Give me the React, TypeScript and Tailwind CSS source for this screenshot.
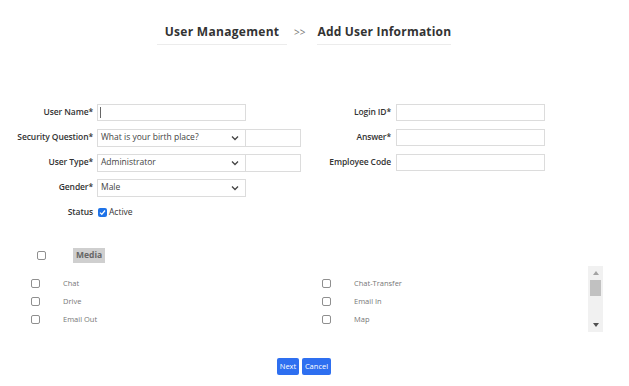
import React from "react";

function Chevron() {
  return (
    <svg width="8" height="6" viewBox="0 0 8 6" className="shrink-0">
      <path d="M1 1.5 L4 4.5 L7 1.5" fill="none" stroke="#444" strokeWidth="1.3" />
    </svg>
  );
}

function TextInput({ w = "w-[149px]", cursor = false }: { w?: string; cursor?: boolean }) {
  return (
    <div className={`${w} h-[17px] border border-[#dcdcdc] bg-white flex items-center px-[2px]`}>
      {cursor && <div className="w-px h-[11px] bg-[#666]" />}
    </div>
  );
}

function Select({ value, extra = false }: { value: string; extra?: boolean }) {
  return (
    <div className="flex items-center">
      <div className="w-[149px] h-[18px] border border-[#dcdcdc] bg-white flex items-center justify-between pl-[3px] pr-[6px]">
        <span className="text-[8.5px] text-[#444]">{value}</span>
        <Chevron />
      </div>
      {extra && <div className="w-[55px] h-[18px] border border-l-0 border-[#dcdcdc] bg-white" />}
    </div>
  );
}

function Label({ children }: { children: React.ReactNode }) {
  return <div className="text-right text-[8.5px] font-semibold text-[#333] tracking-[-0.1px]">{children}</div>;
}

function Box() {
  return <div className="w-[9px] h-[9px] border border-[#8f8f8f] rounded-[2px] bg-white" />;
}

export default function App() {
  const left = ["Chat", "Drive", "Email Out"];
  const right = ["Chat-Transfer", "Email In", "Map"];
  return (
    <div className="w-[629px] h-[386px] bg-white font-['Open_Sans',sans-serif] overflow-hidden">
      {/* Title */}
      <div className="flex items-start pt-[23px] pl-[157px] text-[12px] font-bold text-[#333]">
        <div className="w-[130px] border-b border-[#ececec] pb-[3px] text-center tracking-[0.3px]">User Management</div>
        <div className="pl-[7px] pr-[12px] font-normal text-[#777] text-[10px] pt-[2px]">&gt;&gt;</div>
        <div className="border-b border-[#ececec] pb-[3px] tracking-[0.2px]">Add User Information</div>
      </div>

      {/* Form */}
      <div className="flex mt-[55px]">
        <div className="w-[310px] grid grid-cols-[93px_auto] gap-x-[4px] auto-rows-[25px] items-center">
          <Label>User Name*</Label>
          <TextInput cursor />
          <Label>Security Question*</Label>
          <Select value="What is your birth place?" extra />
          <Label>User Type*</Label>
          <Select value="Administrator" extra />
          <Label>Gender*</Label>
          <Select value="Male" />
          <Label>Status</Label>
          <div className="flex items-center gap-[2px] pl-[1px]">
            <div className="w-[9px] h-[9px] rounded-[2px] bg-[#1f73e8] flex items-center justify-center">
              <svg width="7" height="7" viewBox="0 0 7 7">
                <path d="M1 3.6 L2.8 5.3 L6 1.5" fill="none" stroke="white" strokeWidth="1.3" />
              </svg>
            </div>
            <span className="text-[8.5px] text-[#333]">Active</span>
          </div>
        </div>
        <div className="grid grid-cols-[81px_auto] gap-x-[5px] auto-rows-[25px] items-center content-start">
          <Label>Login ID*</Label>
          <TextInput />
          <Label>Answer*</Label>
          <TextInput />
          <Label>Employee Code</Label>
          <TextInput />
        </div>
      </div>

      {/* Media header */}
      <div className="flex items-center mt-[23px] pl-[37px] h-[15px]">
        <Box />
        <div className="ml-[27px] bg-[#cfcfcf] px-[3px] h-[15px] flex items-center text-[8.5px] font-bold text-[#666]">Media</div>
      </div>

      {/* List */}
      <div className="flex mt-[3px] h-[66px] pl-[31px] w-[603px]">
        <div className="flex-1 flex pt-[13px]">
          <div className="w-[291px] flex flex-col gap-[9px]">
            {left.map((t) => (
              <div key={t} className="flex items-center h-[9px]">
                <Box />
                <span className="ml-[23px] text-[7.5px] text-[#777]">{t}</span>
              </div>
            ))}
          </div>
          <div className="flex flex-col gap-[9px]">
            {right.map((t) => (
              <div key={t} className="flex items-center h-[9px]">
                <Box />
                <span className="ml-[23px] text-[7.5px] text-[#777]">{t}</span>
              </div>
            ))}
          </div>
        </div>
        <div className="w-[15px] h-full bg-[#f1f1f1] flex flex-col items-center">
          <div className="h-[14px] flex items-center justify-center">
            <svg width="6" height="4" viewBox="0 0 6 4"><path d="M0 4 L3 0 L6 4 Z" fill="#a3a3a3" /></svg>
          </div>
          <div className="w-[11px] h-[16px] bg-[#c1c1c1]" />
          <div className="flex-1" />
          <div className="h-[14px] flex items-center justify-center">
            <svg width="6" height="4" viewBox="0 0 6 4"><path d="M0 0 L6 0 L3 4 Z" fill="#505050" /></svg>
          </div>
        </div>
      </div>

      {/* Buttons */}
      <div className="flex pl-[277px] gap-[3px] mt-[26px]">
        <button className="w-[22px] h-[17px] rounded-[2px] bg-[#2e6ff0] text-white text-[7.5px] flex items-center justify-center">Next</button>
        <button className="w-[29px] h-[17px] rounded-[2px] bg-[#2e6ff0] text-white text-[7.5px] flex items-center justify-center">Cancel</button>
      </div>
    </div>
  );
}
